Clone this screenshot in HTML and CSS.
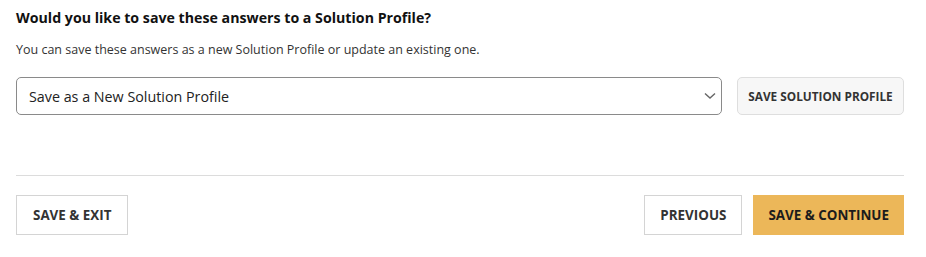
FILE: index.html
```html
<!DOCTYPE html>
<html lang="en">
<head>
    <meta charset="UTF-8">
    <meta name="viewport" content="width=device-width, initial-scale=1.0">
    <title>Save Solution Profile</title>
    <link rel="stylesheet" href="styles.css">
</head>
<body>
    <div class="container">
        <h2 class="title">Would you like to save these answers to a Solution Profile?</h2>
        <p class="subtitle">You can save these answers as a new Solution Profile or update an existing one.</p>
        <div class="profile-row">
            <div class="select-wrap">
                <select class="profile-select">
                    <option>Save as a New Solution Profile</option>
                </select>
                <svg class="chevron" width="12" height="8" viewBox="0 0 12 8">
                    <path d="M1 1.5 L6 6 L11 1.5" fill="none" stroke="#666" stroke-width="1.4"/>
                </svg>
            </div>
            <button type="button" class="btn-light">SAVE SOLUTION PROFILE</button>
        </div>
        <hr class="divider">
        <div class="actions">
            <button type="button" class="btn-outline btn-exit">SAVE &amp; EXIT</button>
            <div class="actions-right">
                <button type="button" class="btn-outline">PREVIOUS</button>
                <button type="button" class="btn-primary">SAVE &amp; CONTINUE</button>
            </div>
        </div>
    </div>
</body>
</html>
```
FILE: styles.css
```css
body {
    font-family: "Open Sans", Arial, sans-serif;
    margin: 0;
    padding: 0;
    background-color: #fff;
    color: #222;
}
.container {
    width: 888px;
    padding: 8px 16px 0;
}
.title {
    font-size: 14.2px;
    font-weight: 700;
    color: #111;
    margin: 0;
    line-height: 20px;
}
.subtitle {
    font-size: 12.5px;
    color: #333;
    margin: 13px 0 0;
    line-height: 18px;
}
.profile-row {
    display: flex;
    gap: 15px;
    margin-top: 18px;
}
.select-wrap {
    position: relative;
    flex: 1;
}
.profile-select {
    width: 100%;
    height: 38px;
    appearance: none;
    -webkit-appearance: none;
    border: 1px solid #8a8a8a;
    border-radius: 5px;
    background-color: #fff;
    padding: 0 12px;
    font-family: inherit;
    font-size: 14.3px;
    color: #222;
}
.chevron {
    position: absolute;
    right: 6px;
    top: 15px;
    pointer-events: none;
}
button {
    font-family: inherit;
    font-weight: 700;
    color: #333;
    cursor: pointer;
}
.btn-light {
    height: 38px;
    width: 167px;
    padding: 0;
    font-size: 11.8px;
    background-color: #f7f7f7;
    border: 1px solid #dedede;
    border-radius: 5px;
}
.divider {
    border: none;
    border-top: 1px solid #dcdcdc;
    margin: 60px 0 0;
}
.actions {
    display: flex;
    justify-content: space-between;
    margin-top: 19px;
}
.actions-right {
    display: flex;
    gap: 11px;
}
.btn-outline,
.btn-primary {
    height: 40px;
    padding: 0 15px;
    font-size: 13.4px;
}
.btn-outline {
    background-color: #fff;
    border: 1px solid #d4d4d4;
}
.btn-exit {
    padding: 0 16px;
}
.btn-primary {
    padding: 0 14px;
    background-color: #ecb759;
    border: 1px solid #ecb759;
    color: #1c1c1c;
}
```
